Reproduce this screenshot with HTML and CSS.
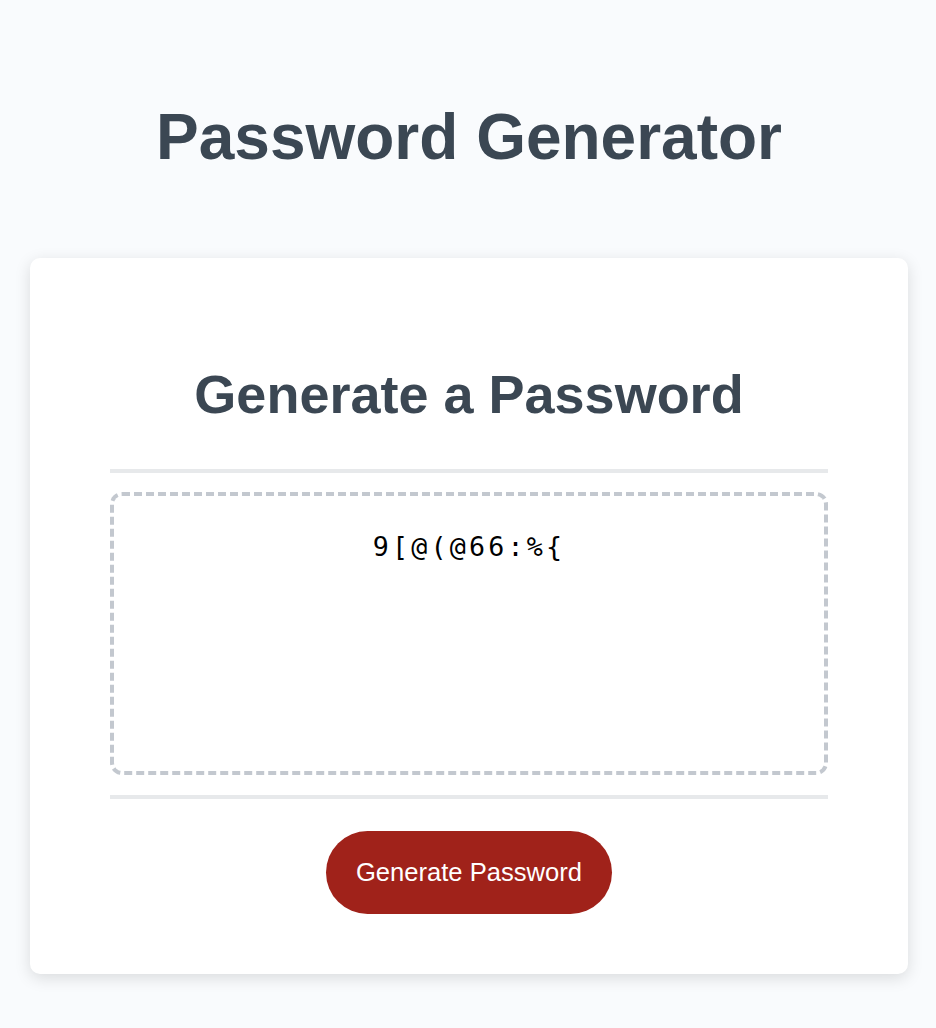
FILE: index.html
```html
<!DOCTYPE html>
<html lang="en">
<head>
<meta charset="UTF-8">
<title>Password Generator</title>
<link rel="stylesheet" href="styles.css">
</head>
<body>
<div class="wrapper">
  <header class="page-header">
    <h1 class="page-title">Password Generator</h1>
  </header>
  <div class="card">
    <div class="card-header">
      <h2 class="card-title">Generate a Password</h2>
    </div>
    <div class="card-body">
      <div class="password-box" id="password">9[@(@66:%{</div>
    </div>
    <div class="card-footer">
      <button class="btn" id="generate">Generate Password</button>
    </div>
  </div>
</div>
</body>
</html>
```
FILE: styles.css
```css
* {
  box-sizing: border-box;
}

body {
  margin: 0;
  background-color: #f9fbfd;
  font-family: "Liberation Sans", Arial, Helvetica, sans-serif;
  color: #3b4753;
}

.wrapper {
  padding: 0 28px 54px 30px;
}

.page-header {
  padding-top: 100px;
  padding-bottom: 84px;
  text-align: center;
}

.page-title {
  margin: 0;
  font-size: 64px;
  line-height: 74px;
  font-weight: bold;
  color: #3b4753;
}

.card {
  background-color: #ffffff;
  border-radius: 10px;
  box-shadow: rgba(0, 0, 0, 0.13) 0 4px 16px 0;
  padding: 60px 80px 60px 80px;
  color: #3b4753;
}

.card-header {
  text-align: center;
  padding-top: 45px;
}

.card-title {
  margin: 0;
  font-size: 54px;
  line-height: 62px;
  font-weight: bold;
}

.card-header::after {
  content: "";
  display: block;
  height: 4px;
  margin-top: 44px;
  background: #e7e9eb;
}

.card-body {
  padding: 19px 0 20px;
}

.password-box {
  height: 283px;
  border: 4px dashed #c3c8cf;
  border-radius: 12px;
  padding: 33px 30px 0;
  text-align: center;
  font-family: "DejaVu Sans Mono", "Liberation Mono", monospace;
  font-size: 26.67px;
  line-height: 36px;
  letter-spacing: 3.2px;
  color: #000000;
}

.card-footer {
  text-align: center;
}

.card-footer::before {
  content: "";
  display: block;
  height: 4px;
  background: #e7e9eb;
  margin-bottom: 32px;
}

.btn {
  display: inline-flex;
  align-items: center;
  justify-content: center;
  height: 83px;
  width: 286px;
  padding: 0;
  border: none;
  border-radius: 42px;
  background-color: #a0221a;
  color: #ffffff;
  font-family: "Liberation Sans", Arial, Helvetica, sans-serif;
  font-size: 25.6px;
  cursor: pointer;
}
```
